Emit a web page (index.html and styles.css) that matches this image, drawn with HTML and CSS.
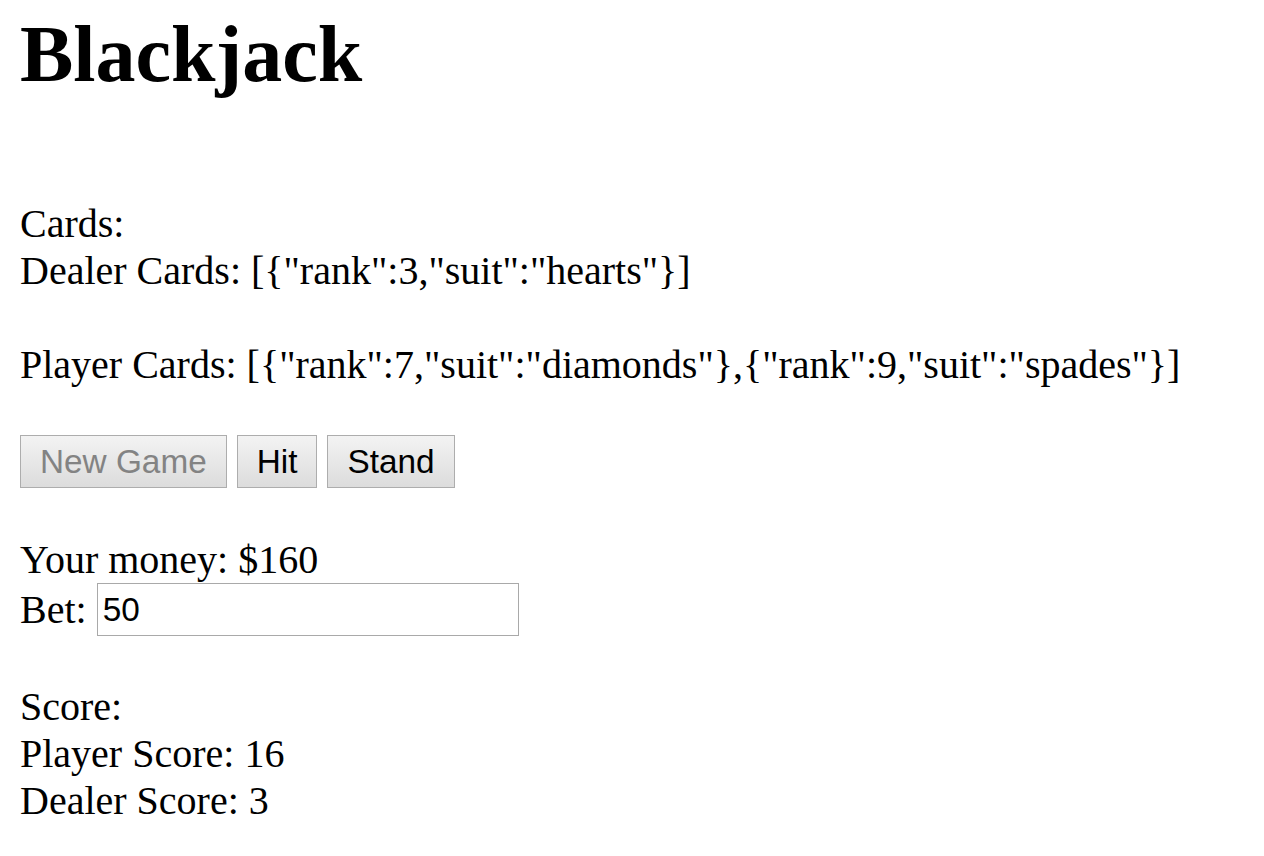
FILE: index.html
```html
<!DOCTYPE html>
<html lang="en">
<head>
<meta charset="utf-8">
<title>Blackjack</title>
<link rel="stylesheet" href="styles.css">
</head>
<body>
<h1 class="title">Blackjack</h1>
<section class="cards">
  <div class="line">Cards:</div>
  <div class="line">Dealer Cards: [{"rank":3,"suit":"hearts"}]</div>
  <div class="line spaced">Player Cards: [{"rank":7,"suit":"diamonds"},{"rank":9,"suit":"spades"}]</div>
</section>
<div class="actions">
  <button class="btn" disabled>New Game</button>
  <button class="btn">Hit</button>
  <button class="btn">Stand</button>
</div>
<section class="money">
  <div class="line">Your money: $160</div>
  <div class="bet-row"><span>Bet:</span><input class="bet" type="text" value="50"></div>
</section>
<section class="score">
  <div class="line">Score:</div>
  <div class="line">Player Score: 16</div>
  <div class="line">Dealer Score: 3</div>
</section>
</body>
</html>
```
FILE: styles.css
```css
html, body {
  background: #ffffff;
}
body {
  margin: 0;
  padding: 0 20px;
  font-family: "Liberation Serif", "Times New Roman", serif;
  font-size: 40px;
  line-height: 47px;
  color: #000000;
}
.title {
  margin: 9px 0 0;
  font-size: 80px;
  line-height: 91px;
  font-weight: bold;
}
.cards {
  margin-top: 100px;
}
.line {
  height: 47px;
  white-space: nowrap;
}
.spaced {
  margin-top: 47px;
}
.actions {
  margin-top: 47px;
  display: flex;
  gap: 10px;
  height: 53px;
}
.btn {
  height: 53px;
  margin: 0;
  padding: 0 19px;
  font-family: "Liberation Sans", Arial, sans-serif;
  font-size: 33.33px;
  color: #000000;
  border: 1px solid #adadad;
  border-radius: 0;
  background: linear-gradient(#f3f3f3, #dcdcdc);
}
.btn:disabled {
  color: #838383;
}
.money {
  margin-top: 48px;
}
.bet-row {
  display: flex;
  align-items: center;
  gap: 10px;
  height: 53px;
}
.bet {
  box-sizing: border-box;
  width: 422px;
  height: 53px;
  margin: 0;
  padding: 0 5px;
  font-family: "Liberation Sans", Arial, sans-serif;
  font-size: 33.33px;
  color: #000000;
  border: 1px solid #a9a9a9;
  border-radius: 0;
  background: #ffffff;
  outline: none;
}
.score {
  margin-top: 47px;
}
```
